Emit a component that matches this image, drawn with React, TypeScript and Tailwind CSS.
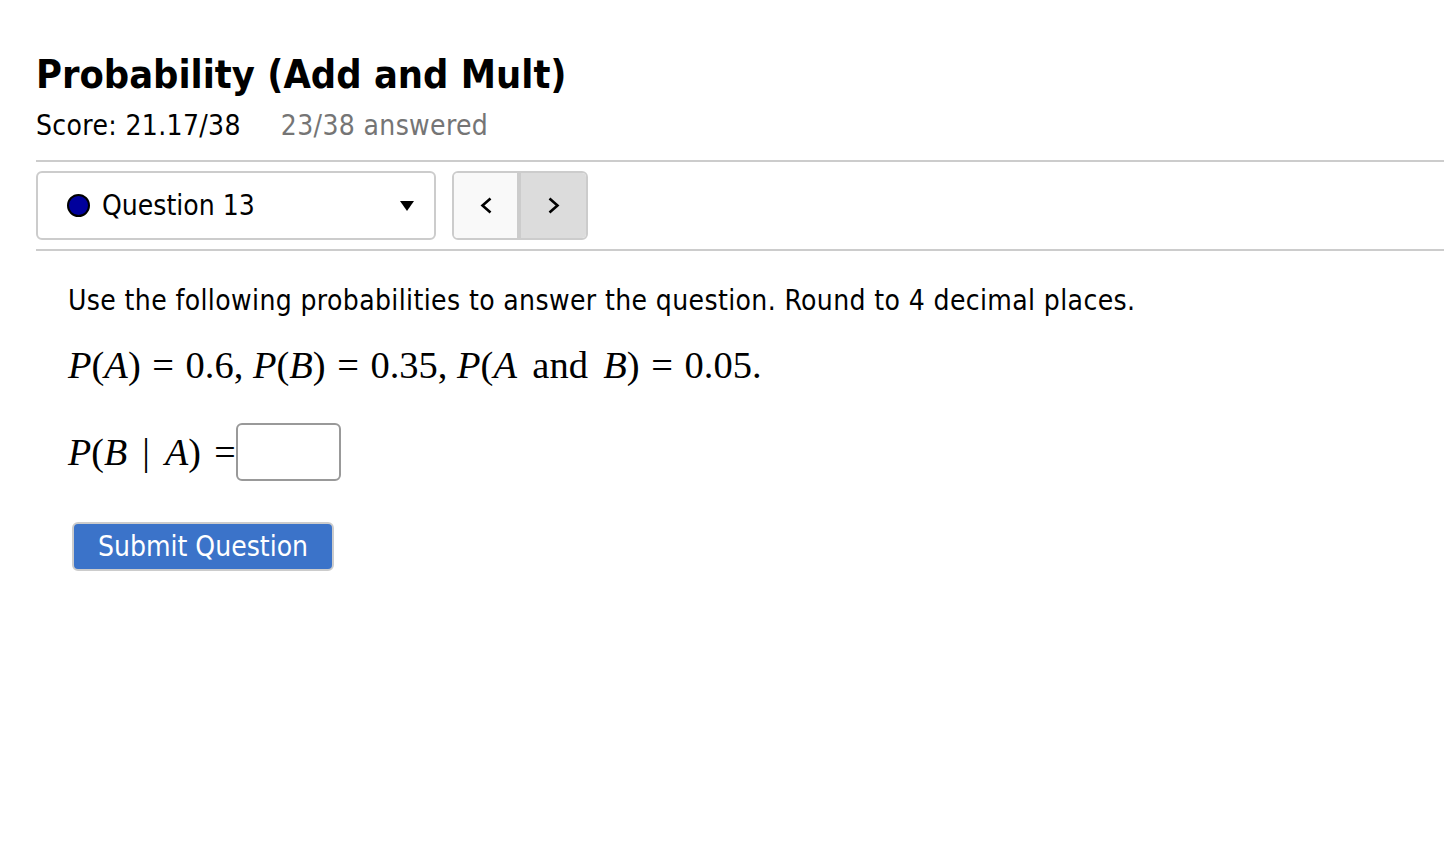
const M = ({ children }: { children: React.ReactNode }) => <i>{children}</i>;

const Eq = () => <span className="mx-[0.3em]">=</span>;

const Chevron = ({ dir }: { dir: "left" | "right" }) => (
  <svg width="12" height="17" viewBox="0 0 12 17" fill="none" stroke="black" strokeWidth="2.6" strokeLinejoin="miter">
    {dir === "left" ? <polyline points="10.5,1.5 2.5,8.5 10.5,15.5" /> : <polyline points="1.5,1.5 9.5,8.5 1.5,15.5" />}
  </svg>
);

const App = () => {
  return (
    <div className="min-h-screen bg-white text-black font-['DejaVu_Sans_Condensed','DejaVu_Sans',sans-serif] [font-stretch:condensed]">
      <div className="ml-9 pt-[48px]">
        <h1 className="h-[52px] text-[39.4px] font-bold leading-[52px]">Probability (Add and Mult)</h1>
        <div className="mt-[6px] flex h-[40px] items-center gap-[40px] text-[28px] tracking-[0.35px]">
          <span>Score: 21.17/38</span>
          <span className="text-[#757575]">23/38 answered</span>
        </div>
        <div className="mt-[14px] border-t-2 border-[#cccccc]" />

        <div className="flex gap-[16px] py-[9px]">
          <div className="flex h-[69px] w-[400px] items-center rounded-md border-2 border-[#cccccc] pl-[29px] pr-[20px]">
            <span className="h-[23px] w-[23px] rounded-full border-2 border-black bg-[#00009c]" />
            <span className="ml-[12px] text-[28px]">Question 13</span>
            <span className="ml-auto h-0 w-0 border-x-[7px] border-t-[10px] border-x-transparent border-t-black" />
          </div>
          <div className="flex h-[69px] w-[136px] overflow-hidden rounded-md border-2 border-[#cccccc]">
            <button className="flex w-[67px] items-center justify-center border-r-[4px] border-[#cccccc] bg-[#f9f9f9]">
              <Chevron dir="left" />
            </button>
            <button className="flex flex-1 items-center justify-center bg-[#dcdcdc]">
              <Chevron dir="right" />
            </button>
          </div>
        </div>
        <div className="border-t-2 border-[#cccccc]" />

        <div className="pl-8 pt-[30px]">
          <p className="text-[28px] leading-[40px] tracking-[0.38px]">
            Use the following probabilities to answer the question. Round to 4 decimal places.
          </p>
          <p className="mt-[24px] font-['Liberation_Serif',serif] text-[38.5px] leading-[40px] [font-stretch:normal]">
            <M>P</M>(<M>A</M>)<Eq />0.6, <M>P</M>(<M>B</M>)<Eq />0.35, <M>P</M>(<M>A</M>
            <span className="mx-[0.4em]">and</span>
            <M>B</M>)<Eq />0.05.
          </p>
          <div className="mt-[38px] flex h-[58px] items-center font-['Liberation_Serif',serif] text-[38px] [font-stretch:normal]">
            <span>
              <M>P</M>(<M>B</M>
              <span className="mx-[0.4em]">|</span>
              <M>A</M>)<span className="ml-[0.35em]">=</span>
            </span>
            <input className="h-[58px] w-[105px] rounded-md border-2 border-[#999999] outline-none" />
          </div>
          <button className="ml-[4px] mt-[41px] h-[49px] w-[262px] rounded-md border-2 border-[#cccccc] bg-[#3b73c9] text-[28px] text-white">
            Submit Question
          </button>
        </div>
      </div>
    </div>
  );
};

export default App;
